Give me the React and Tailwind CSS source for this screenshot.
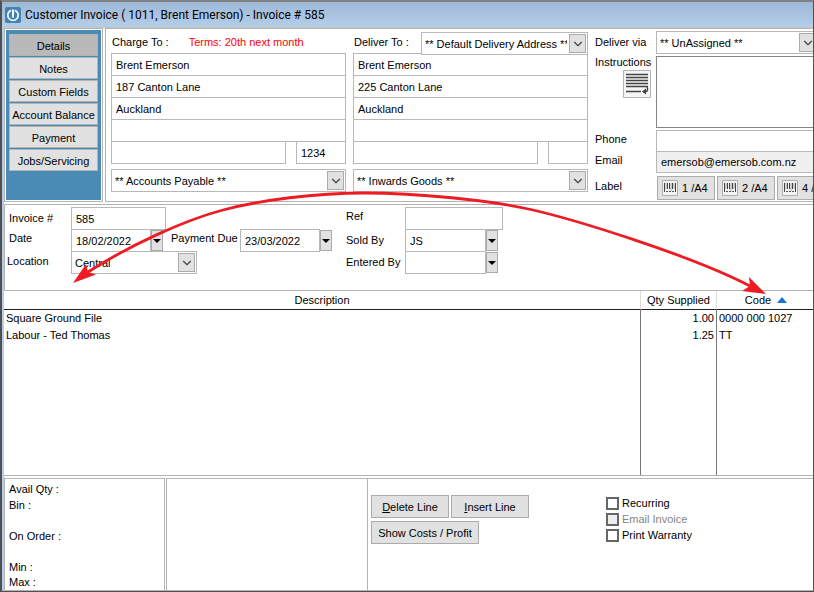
import { useState } from "react";
import { clsx } from "clsx";
import { ChevronDown } from "lucide-react";

const TABS = ["Details", "Notes", "Custom Fields", "Account Balance", "Payment", "Jobs/Servicing"];

const LINES = [
    { id: 1, description: "Square Ground File", qty: "1.00", code: "0000 000 1027" },
    { id: 2, description: "Labour - Ted Thomas", qty: "1.25", code: "TT" },
];

const STOCK_LABELS = ["Avail Qty :", "Bin :", "", "On Order :", "", "Min :", "Max :"];

function TextField({ label, value = "", className }) {
    return (
        <input
            type="text"
            aria-label={label}
            defaultValue={value}
            className={clsx("h-[23px] min-w-0 border border-[#b8b8b8] bg-white px-1 outline-none", className)}
        />
    );
}

function SelectField({ id, label, value, className }) {
    return (
        <div className={clsx("relative h-[23px] border border-[#b8b8b8] bg-white", className)}>
            <select id={id} aria-label={label} className="h-full w-full appearance-none bg-transparent pr-5 pl-[3px] outline-none">
                <option>{value}</option>
            </select>
            <span className="pointer-events-none absolute inset-y-px right-px flex w-[17px] items-center justify-center border border-[#ababab] bg-[#e1e1e1]">
                <ChevronDown className="h-3.5 w-3.5 shrink-0 text-[#444]" strokeWidth={2} />
            </span>
        </div>
    );
}

// Campo con boton desplegable estrecho
function PickerField({ id, value = "", className }) {
    return (
        <div className="flex h-[23px]">
            <input
                id={id}
                type="text"
                defaultValue={value}
                className={clsx("min-w-0 border border-[#b8b8b8] bg-white px-1 outline-none", className)}
            />
            <button
                type="button"
                aria-label="Open list"
                className="my-px flex w-3 items-center justify-center border border-[#ababab] bg-[#e1e1e1]"
            >
                <svg viewBox="0 0 8 4" className="h-1 w-2 shrink-0">
                    <path d="M0 0h8L4 4z" fill="#000" />
                </svg>
            </button>
        </div>
    );
}

function AddressFields({ name, lines, postcode, split, contact }) {
    return (
        <>
            <div className="flex flex-col -space-y-px">
                {lines.map((line, i) => (
                    <TextField key={i} label={`${name} line ${i + 1}`} value={line} />
                ))}
                <div className="flex justify-between">
                    <TextField label={`${name} city`} className={split[0]} />
                    <TextField label={`${name} postcode`} value={postcode} className={split[1]} />
                </div>
            </div>
            <SelectField label={`${name} contact`} value={contact} className="mt-[5px]" />
        </>
    );
}

function LabelButton({ children }) {
    return (
        <button
            type="button"
            className="flex h-6 w-[58px] shrink-0 items-center gap-1 border border-[#ababab] bg-[#e1e1e1] pl-1 whitespace-nowrap"
        >
            <svg viewBox="0 0 16 16" className="h-4 w-4 shrink-0">
                <path d="M.5.5h15v15H.5z" fill="#f2f2f2" stroke="#b0b0b0" />
                <path d="M2.500 3v9M5.500 3v6M7.500 3v6M10.500 3v6M13.500 3v9" stroke="#444" />
                <path d="M4 3v6M9 3v8M12 3v6" stroke="#aaa" />
                <path d="M4 11.500h2M7 11.500h2M10 11.500h2" stroke="#555" />
            </svg>
            {children}
        </button>
    );
}

function CheckOption({ id, label, disabled }) {
    return (
        <div className="flex h-4 items-center gap-[3px]">
            <input
                id={id}
                type="checkbox"
                disabled={disabled}
                className="h-[13px] w-[13px] appearance-none border-2 border-[#666] bg-white checked:bg-[#666] disabled:bg-[#eee]"
            />
            <label htmlFor={id} className={clsx(disabled && "text-[#858585]")}>
                {label}
            </label>
        </div>
    );
}

export default function App() {
    const [tab, setTab] = useState("Details");

    return (
        <div className="relative flex min-h-screen flex-col overflow-hidden border-t-2 border-r border-b border-l-2 border-[#505050] border-t-[#808080] bg-white font-['Liberation_Sans',Arial,sans-serif] text-[11px] leading-4 text-black">
            {/* Title bar */}
            <header className="flex h-[25px] shrink-0 items-center gap-1 bg-gradient-to-b from-[#9db9d8] to-[#b5cee8] pl-[3px]">
                <svg viewBox="0 0 16 16" className="h-4 w-4">
                    <rect width="16" height="16" rx="2" fill="#4383b0" />
                    <path d="M5.500 3.600a5.200 5.200 0 1 0 5 0" fill="none" stroke="#e9f3fa" strokeWidth="1.800" strokeLinecap="round" />
                    <path d="M8 2.500v8" stroke="#fff" strokeWidth="2" />
                </svg>
                <h1 className="font-[Roboto,sans-serif] text-[12px] whitespace-nowrap">Customer Invoice ( 1011, Brent Emerson) - Invoice # 585</h1>
            </header>

            <div className="flex flex-1 flex-col border-l-2 border-[#b5cee8]">
                {/* Customer details */}
                <div className="flex gap-0.5 border-t border-[#c4c4c4]">
                    <nav className="w-[99px] shrink-0 border border-[#b4b4b4] p-px">
                        <div className="flex h-full flex-col gap-px bg-[#4a8bb5] px-[3px] pt-1">
                            {TABS.map((name) => (
                                <button
                                    key={name}
                                    type="button"
                                    onClick={() => setTab(name)}
                                    className={clsx(
                                        "h-[22px] border border-[#b4b4b4] pt-px whitespace-nowrap",
                                        tab === name ? "bg-[#b9b9b9]" : "bg-[#e1e1e1]",
                                    )}
                                >
                                    {name}
                                </button>
                            ))}
                        </div>
                    </nav>

                    <section className="flex min-w-0 flex-1 gap-[7px] overflow-hidden border border-r-0 border-[#b4b4b4] pt-[3px] pb-px pl-[5px]">
                        <div className="w-[235px] shrink-0">
                            <div className="flex h-[21px] gap-5 pt-0.5">
                                <span className="pl-px">Charge To :</span>
                                <span className="text-[#f00]">Terms: 20th next month</span>
                            </div>
                            <AddressFields
                                name="Charge to"
                                lines={["Brent Emerson", "187 Canton Lane", "Auckland", ""]}
                                postcode="1234"
                                split={["w-[175px]", "w-[50px]"]}
                                contact="** Accounts Payable **"
                            />
                        </div>

                        <div className="w-[235px] shrink-0">
                            <div className="flex h-[21px] justify-between">
                                <label htmlFor="delivery-address" className="pt-0.5 pl-px">
                                    Deliver To :
                                </label>
                                <SelectField id="delivery-address" value="** Default Delivery Address **" className="w-[167px]" />
                            </div>
                            <AddressFields
                                name="Deliver to"
                                lines={["Brent Emerson", "225 Canton Lane", "Auckland", ""]}
                                split={["w-[185px]", "w-10"]}
                                contact="** Inwards Goods **"
                            />
                        </div>

                        <div className="-mt-px grid min-w-0 flex-1 grid-cols-[61px_minmax(162px,1fr)] content-start">
                            <label htmlFor="deliver-via" className="pt-[3px]">
                                Deliver via
                            </label>
                            <SelectField id="deliver-via" value="** UnAssigned **" />
                            <div>
                                <label htmlFor="instructions">Instructions</label>
                                <button type="button" aria-label="Edit instructions" className="ml-7 block">
                                    <svg viewBox="0 0 28 28" className="h-7 w-7">
                                        <path d="M.5.5h27v27H.5z" fill="#f5f5f5" stroke="#b4b4b4" />
                                        <path d="M3 4.500h22M3 7.500h22M3 10.500h22M3 13.500h22M3 16.500h22M3 21.500h15" stroke="#444" strokeWidth="1.500" />
                                        <path d="M24 17q2.500 5-4 5" fill="none" stroke="#444" strokeWidth="1.500" />
                                        <path d="M19 21.500l4-3v6z" fill="#444" />
                                    </svg>
                                </button>
                            </div>
                            <textarea id="instructions" className="mt-0.5 block h-[72px] resize-none border border-[#858585] bg-white p-1 outline-none" />
                            <label htmlFor="phone" className="pt-[3px]">
                                Phone
                            </label>
                            <input id="phone" type="tel" className="mt-0.5 h-[21px] border border-b-0 border-[#b8b8b8] bg-white px-1 outline-none" />
                            <label htmlFor="email" className="pt-px">
                                Email
                            </label>
                            <input
                                id="email"
                                type="email"
                                defaultValue="emersob@emersob.com.nz"
                                className="h-[22px] border border-[#b8b8b8] bg-[#f0f0f0] px-1 outline-none"
                            />
                            <span className="pt-[5px]">Label</span>
                            <div className="mt-[3px] flex gap-0.5 pl-px">
                                <LabelButton>1 /A4</LabelButton>
                                <LabelButton>2 /A4</LabelButton>
                                <LabelButton>4 /A4</LabelButton>
                            </div>
                        </div>
                    </section>
                </div>

                {/* Invoice header */}
                <section className="mt-0.5 flex h-[86px] border-t border-l border-[#b4b4b4] pt-0.5">
                    <div className="w-[341px] shrink-0 -space-y-px">
                        <div className="flex">
                            <label htmlFor="invoice-no" className="w-[66px] pt-[3px] pl-1">
                                Invoice #
                            </label>
                            <input
                                id="invoice-no"
                                type="text"
                                defaultValue="585"
                                className="h-[23px] w-[95px] border border-[#b8b8b8] px-1 outline-none"
                            />
                        </div>
                        <div className="flex">
                            <label htmlFor="date" className="w-[66px] pt-px pl-1">
                                Date
                            </label>
                            <PickerField id="date" value="18/02/2022" className="w-20" />
                            <label htmlFor="due" className="w-[77px] pt-px pl-2 whitespace-nowrap">
                                Payment Due
                            </label>
                            <PickerField id="due" value="23/03/2022" className="w-20" />
                        </div>
                        <div className="flex">
                            <label htmlFor="location" className="w-[66px] pt-0.5 pl-0.5">
                                Location
                            </label>
                            <SelectField id="location" value="Central" className="w-[126px]" />
                        </div>
                    </div>
                    <div className="-space-y-px">
                        <div className="flex">
                            <label htmlFor="ref" className="w-[59px] pt-px">
                                Ref
                            </label>
                            <input id="ref" type="text" className="h-[23px] w-[98px] border border-[#b8b8b8] px-1 outline-none" />
                        </div>
                        <div className="flex">
                            <label htmlFor="sold-by" className="w-[59px] pt-[3px]">
                                Sold By
                            </label>
                            <PickerField id="sold-by" value="JS" className="w-[81px]" />
                        </div>
                        <div className="flex">
                            <label htmlFor="entered-by" className="w-[59px] pt-[3px]">
                                Entered By
                            </label>
                            <PickerField id="entered-by" className="w-[81px]" />
                        </div>
                    </div>
                </section>

                {/* Invoice lines */}
                <table className="h-[186px] w-full table-fixed border-separate border-spacing-0 border-y border-[#b4b4b4]">
                    <thead>
                        <tr className="h-[19px]">
                            <th className="border-b border-[#222] p-0 font-normal">Description</th>
                            <th className="w-[76px] border-b border-l border-[#222] border-l-[#ddd] p-0 font-normal">Qty Supplied</th>
                            <th className="w-[97px] border-b border-l border-[#222] border-l-[#ddd] p-0 font-normal">
                                <span className="inline-flex items-center gap-1.5 pl-0.5">
                                    Code
                                    <svg viewBox="0 0 10 6" className="h-1.5 w-2.5">
                                        <path d="M0 6l5-6 5 6z" fill="#1874d8" />
                                    </svg>
                                </span>
                            </th>
                        </tr>
                    </thead>
                    <tbody>
                        {LINES.map((line) => (
                            <tr key={line.id} className="h-[17px] align-top">
                                <td className="p-0 pl-0.5">{line.description}</td>
                                <td className="border-l border-[#777] p-0 pr-0.5 text-right">{line.qty}</td>
                                <td className="border-l border-[#777] p-0 pl-0.5">{line.code}</td>
                            </tr>
                        ))}
                        <tr>
                            <td />
                            <td className="border-l border-[#777]" />
                            <td className="border-l border-[#777]" />
                        </tr>
                    </tbody>
                </table>

                {/* Stock info and actions */}
                <div className="mt-0.5 flex flex-1 border-b border-[#b4b4b4]">
                    <section className="w-[161px] shrink-0 border border-b-0 border-[#b4b4b4] pt-0.5 pl-1">
                        {STOCK_LABELS.map((label, i) => (
                            <p key={i} className="h-[15px] odd:h-4">
                                {label}
                            </p>
                        ))}
                    </section>
                    <section className="ml-px w-[201px] shrink-0 border-t border-l border-[#b4b4b4]" />
                    <section className="flex min-w-0 flex-1 border-t border-l border-[#b4b4b4] pt-4 pl-[3px]">
                        <div className="w-[235px] shrink-0">
                            <div className="flex gap-0.5">
                                <button type="button" className="h-[23px] w-[78px] border border-[#ababab] bg-[#e1e1e1]">
                                    <u>D</u>elete Line
                                </button>
                                <button type="button" className="h-[23px] w-[78px] border border-[#ababab] bg-[#e1e1e1]">
                                    <u>I</u>nsert Line
                                </button>
                            </div>
                            <button type="button" className="mt-[3px] h-[23px] w-[108px] border border-[#ababab] bg-[#e1e1e1]">
                                Show Costs / Profit
                            </button>
                        </div>
                        <div>
                            <CheckOption id="recurring" label="Recurring" />
                            <CheckOption id="email-invoice" label="Email Invoice" disabled />
                            <CheckOption id="print-warranty" label="Print Warranty" />
                        </div>
                    </section>
                </div>
            </div>

            {/* Arrow linking the description and code columns */}
            <svg viewBox="0 0 814 592" className="pointer-events-none absolute -top-0.5 -left-0.5 h-[592px] w-[814px]">
                <path d="M88 272C130 245 185 220 223 210S315 193 365 193S490 200 533 210S690 255 750 286" fill="none" stroke="#ed1c24" strokeWidth="2.800" />
                <path d="M73 283L86 264L88 272L96 274.500Z" fill="#ed1c24" />
                <path d="M766 294L749 277L750 286L742 291Z" fill="#ed1c24" />
            </svg>
        </div>
    );
}
